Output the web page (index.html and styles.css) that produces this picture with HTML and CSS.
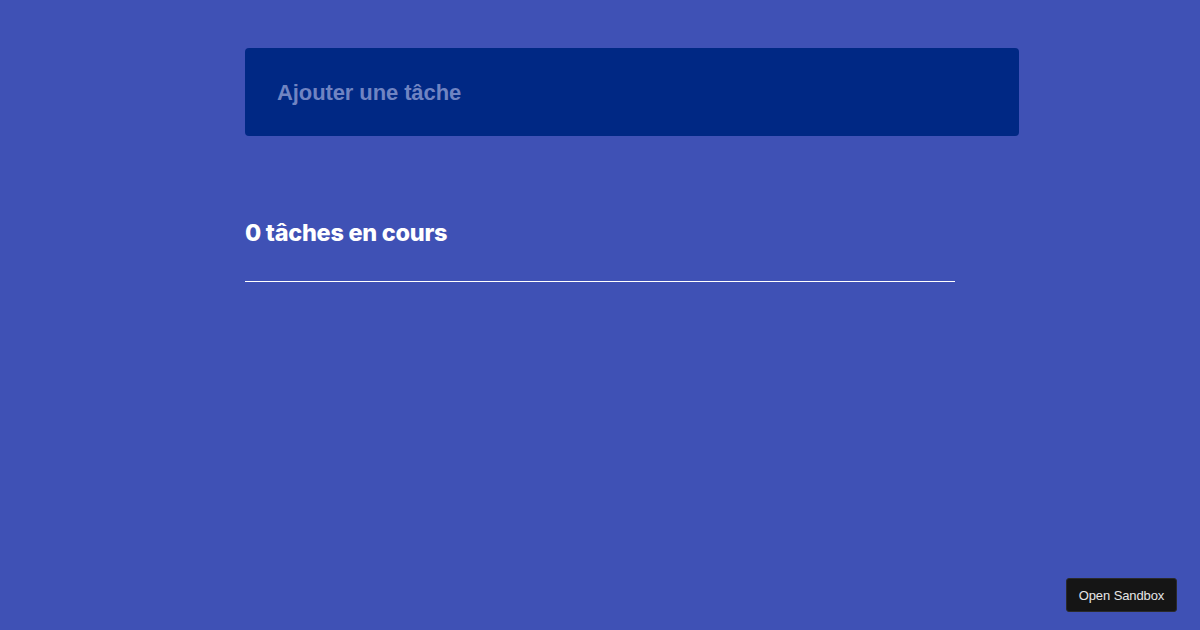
FILE: index.html
```html
<!DOCTYPE html>
<html lang="fr">
<head>
<meta charset="utf-8">
<title>Tâches</title>
<link rel="stylesheet" href="styles.css">
</head>
<body>
<main class="app">
  <form class="add-form">
    <input class="add-input" type="text" placeholder="Ajouter une tâche">
  </form>
  <section class="tasks">
    <h2 class="tasks-title">0 tâches en cours</h2>
    <hr class="tasks-rule">
  </section>
</main>
<a class="sandbox-btn" href="#">Open Sandbox</a>
</body>
</html>
```
FILE: styles.css
```css
html, body {
  margin: 0;
  padding: 0;
  height: 100%;
}
body {
  background: #3f51b5;
  font-family: "Liberation Sans", Arial, sans-serif;
  position: relative;
  overflow: hidden;
}
.app {
  padding: 48px 0 0 245px;
}
.add-form {
  margin: 0;
}
.add-input {
  box-sizing: border-box;
  width: 774px;
  height: 88px;
  border: none;
  border-radius: 4px;
  background: #002884;
  padding: 2px 32px 0;
  font-family: "Liberation Sans", Arial, sans-serif;
  font-weight: 700;
  font-size: 22px;
  letter-spacing: -0.1px;
  color: #fff;
  outline: none;
  display: block;
}
.add-input::placeholder {
  color: #7084c2;
  opacity: 1;
}
.tasks {
  width: 710px;
  padding-top: 81px;
}
.tasks-title {
  margin: 0;
  font-family: "Inter", "Noto Sans", sans-serif;
  font-weight: 800;
  font-size: 23.5px;
  line-height: 32px;
  color: #fff;
  letter-spacing: -0.28px;
}
.tasks-rule {
  margin: 32px 0 0;
  border: none;
  border-top: 1px solid #ffffff;
  height: 0;
}
.sandbox-btn {
  position: absolute;
  right: 23px;
  bottom: 18px;
  width: 111px;
  text-align: center;
  background: #151515;
  color: #e6e6e6;
  font-family: "Liberation Sans", Arial, sans-serif;
  font-size: 13px;
  letter-spacing: -0.1px;
  text-decoration: none;
  height: 34px;
  line-height: 34px;
  border-radius: 3px;
  border: 1px solid #2a2a2a;
  box-sizing: border-box;
}
```
